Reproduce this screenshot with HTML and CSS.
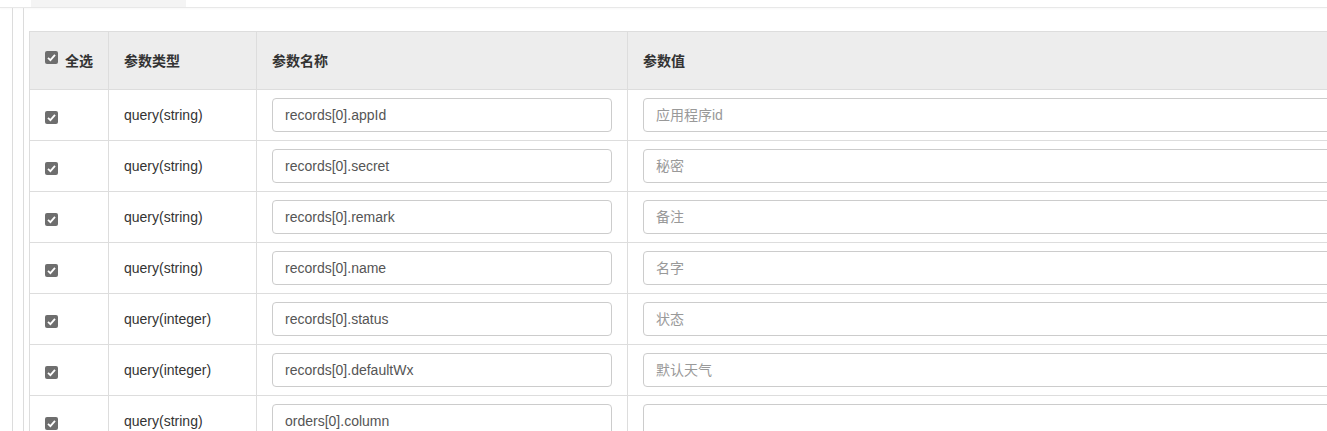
FILE: index.html
```html
<!DOCTYPE html>
<html lang="zh-CN">
<head>
<meta charset="utf-8">
<title>参数</title>
<link rel="stylesheet" href="styles.css">
</head>
<body>
<div class="topbar"><div class="tab"></div></div>
<div class="rail">
  <div class="rail-inner">
    <table class="params">
      <thead>
        <tr>
          <th class="c-check"><span class="cb cb-head"><svg viewBox="0 0 13 13" width="13" height="13"><rect width="13" height="13" rx="2" fill="#6e6e6e"/><path d="M3 6.8 L5.4 9.2 L10 3.8" fill="none" stroke="#fff" stroke-width="1.8"/></svg></span>全选</th>
          <th class="c-type">参数类型</th>
          <th class="c-name">参数名称</th>
          <th class="c-value">参数值</th>
        </tr>
      </thead>
      <tbody>
        <tr>
          <td class="c-check"><span class="cb"><svg viewBox="0 0 13 13" width="13" height="13"><rect width="13" height="13" rx="2" fill="#6e6e6e"/><path d="M3 6.8 L5.4 9.2 L10 3.8" fill="none" stroke="#fff" stroke-width="1.8"/></svg></span></td>
          <td>query(string)</td>
          <td><input class="field" type="text" value="records[0].appId"></td>
          <td><input class="field" type="text" placeholder="应用程序id"></td>
        </tr>
        <tr>
          <td class="c-check"><span class="cb"><svg viewBox="0 0 13 13" width="13" height="13"><rect width="13" height="13" rx="2" fill="#6e6e6e"/><path d="M3 6.8 L5.4 9.2 L10 3.8" fill="none" stroke="#fff" stroke-width="1.8"/></svg></span></td>
          <td>query(string)</td>
          <td><input class="field" type="text" value="records[0].secret"></td>
          <td><input class="field" type="text" placeholder="秘密"></td>
        </tr>
        <tr>
          <td class="c-check"><span class="cb"><svg viewBox="0 0 13 13" width="13" height="13"><rect width="13" height="13" rx="2" fill="#6e6e6e"/><path d="M3 6.8 L5.4 9.2 L10 3.8" fill="none" stroke="#fff" stroke-width="1.8"/></svg></span></td>
          <td>query(string)</td>
          <td><input class="field" type="text" value="records[0].remark"></td>
          <td><input class="field" type="text" placeholder="备注"></td>
        </tr>
        <tr>
          <td class="c-check"><span class="cb"><svg viewBox="0 0 13 13" width="13" height="13"><rect width="13" height="13" rx="2" fill="#6e6e6e"/><path d="M3 6.8 L5.4 9.2 L10 3.8" fill="none" stroke="#fff" stroke-width="1.8"/></svg></span></td>
          <td>query(string)</td>
          <td><input class="field" type="text" value="records[0].name"></td>
          <td><input class="field" type="text" placeholder="名字"></td>
        </tr>
        <tr>
          <td class="c-check"><span class="cb"><svg viewBox="0 0 13 13" width="13" height="13"><rect width="13" height="13" rx="2" fill="#6e6e6e"/><path d="M3 6.8 L5.4 9.2 L10 3.8" fill="none" stroke="#fff" stroke-width="1.8"/></svg></span></td>
          <td>query(integer)</td>
          <td><input class="field" type="text" value="records[0].status"></td>
          <td><input class="field" type="text" placeholder="状态"></td>
        </tr>
        <tr>
          <td class="c-check"><span class="cb"><svg viewBox="0 0 13 13" width="13" height="13"><rect width="13" height="13" rx="2" fill="#6e6e6e"/><path d="M3 6.8 L5.4 9.2 L10 3.8" fill="none" stroke="#fff" stroke-width="1.8"/></svg></span></td>
          <td>query(integer)</td>
          <td><input class="field" type="text" value="records[0].defaultWx"></td>
          <td><input class="field" type="text" placeholder="默认天气"></td>
        </tr>
        <tr>
          <td class="c-check"><span class="cb"><svg viewBox="0 0 13 13" width="13" height="13"><rect width="13" height="13" rx="2" fill="#6e6e6e"/><path d="M3 6.8 L5.4 9.2 L10 3.8" fill="none" stroke="#fff" stroke-width="1.8"/></svg></span></td>
          <td>query(string)</td>
          <td><input class="field" type="text" value="orders[0].column"></td>
          <td><input class="field" type="text"></td>
        </tr>
      </tbody>
    </table>
  </div>
</div>
</body>
</html>
```
FILE: styles.css
```css
html, body {
  margin: 0;
  padding: 0;
  background: #fff;
  overflow: hidden;
}
body {
  font-family: "Liberation Sans", Arial, "Noto Sans CJK SC", sans-serif;
  font-size: 14px;
  color: #333;
  width: 1327px;
  height: 431px;
}
.topbar {
  height: 7px;
  border-bottom: 1px solid #e8e8e8;
  box-shadow: 0 1px 2px rgba(0,0,0,0.03);
}
.tab {
  margin-left: 31px;
  width: 155px;
  height: 7px;
  background: #f4f4f4;
}
.rail {
  margin-left: 12px;
  border-left: 1px solid #dcdcdc;
  height: 423px;
}
.rail-inner {
  margin-left: 10px;
  border-left: 1px solid #dcdcdc;
  height: 100%;
  padding: 23px 0 0 5px;
}
.params {
  border-collapse: collapse;
  table-layout: fixed;
  width: 1400px;
  border: 1px solid #dddddd;
}
.params th, .params td {
  border: 1px solid #dddddd;
  padding: 8px 15px;
  text-align: left;
  vertical-align: middle;
}
.params th {
  background: #ededed;
  font-weight: bold;
  font-size: 14px;
  height: 41px;
  padding-top: 7px;
  padding-bottom: 9px;
  color: #333;
  white-space: nowrap;
}
.params td {
  height: 34px;
}
.c-check { width: 48px; }
.c-type { width: 117px; }
.c-name { width: 340px; }
.c-value { width: auto; }
th.c-check { overflow: visible; }
.cb {
  display: inline-block;
  width: 13px;
  height: 13px;
  vertical-align: middle;
}
.cb svg { display: block; }
td .cb { position: relative; top: 1px; }
.cb-head { margin-right: 7px; position: relative; top: -4px; }
.field {
  display: block;
  box-sizing: border-box;
  width: 100%;
  height: 34px;
  padding: 6px 12px;
  border: 1px solid #cccccc;
  border-radius: 4px;
  font-family: "Liberation Sans", Arial, "Noto Sans CJK SC", sans-serif;
  font-size: 14px;
  color: #555;
  background: #fff;
  margin: 0;
}
.field::placeholder { color: #999; }
```
